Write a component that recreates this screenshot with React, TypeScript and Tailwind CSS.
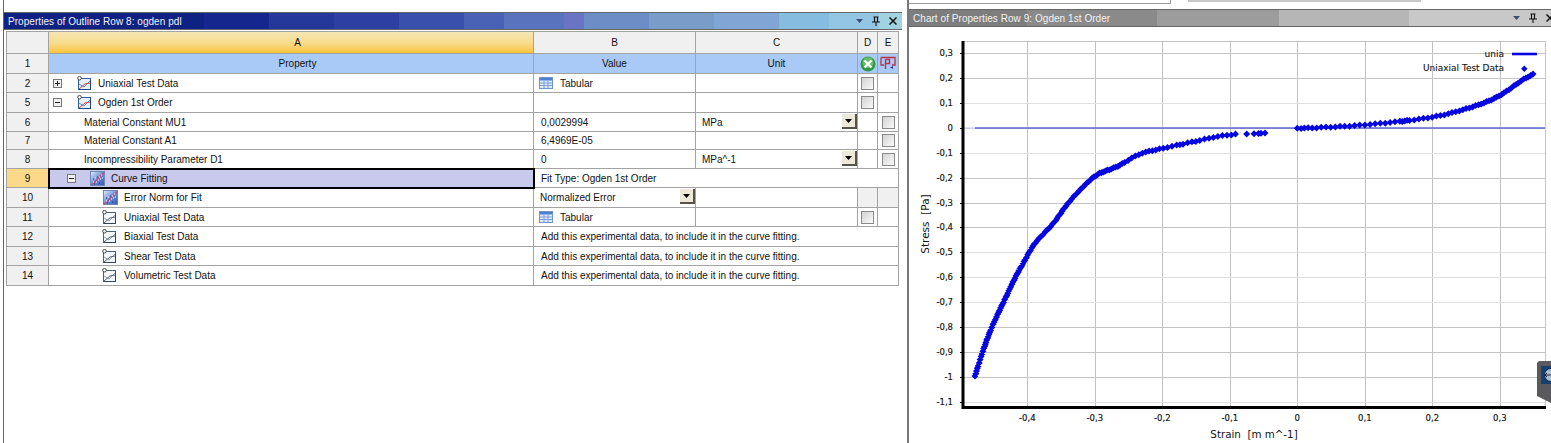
import React from "react";

const sans = { fontFamily: '"Liberation Sans", Arial, sans-serif' };
const GRID = "grid grid-cols-[42px_485px_162px_162px_20px_21px]";

function TreeBox({ plus }: { plus?: boolean }) {
  return (
    <svg width="9" height="9" viewBox="0 0 9 9" className="shrink-0">
      <rect x="0.5" y="0.5" width="8" height="8" fill="#f0f0f0" stroke="#777" />
      <path d={plus ? "M2 4.5H7M4.5 2V7" : "M2 4.5H7"} stroke="#222" />
    </svg>
  );
}

function PlotIcon({ muted }: { muted?: boolean }) {
  return (
    <svg width="15" height="15" viewBox="0 0 15 15" className="shrink-0">
      <rect x="1.5" y="2.5" width="12" height="11" fill={muted ? "#f4f7fb" : "#e6f1fb"} stroke={muted ? "#4d5f78" : "#2f5d99"} />
      <path d="M2 8 L7 11 L13 5" stroke={muted ? "#8ea3bd" : "#4f8fd6"} fill="none" />
      <path d="M2 13 L8 8 L13 7" stroke={muted ? "#54606e" : "#dc3a40"} fill="none" />
      <circle cx="2.5" cy="2.2" r="1.8" fill="#fff" stroke="#444" />
      <path d="M2 13.5H13.5V4" stroke={muted ? "#33445c" : "#1d4580"} fill="none" />
    </svg>
  );
}

function FitIcon() {
  return (
    <svg width="15" height="15" viewBox="0 0 15 15" className="shrink-0">
      <defs>
        <linearGradient id="fitg" x1="0" y1="0" x2="1" y2="1">
          <stop offset="0" stopColor="#e6eefa" />
          <stop offset="0.5" stopColor="#6f92d8" />
          <stop offset="1" stopColor="#2f55ad" />
        </linearGradient>
      </defs>
      <rect x="0.5" y="0.5" width="14" height="14" fill="url(#fitg)" stroke="#6d88b8" />
      <path d="M1 14 C6 11 9 6 14 1.5" stroke="#d23f70" strokeWidth="1.2" fill="none" />
      <path d="M3 11h1M6 11h1M5 7h1M9 6h1M8 9h1M11 4h1M10 8h1M12 7h1" stroke="#fff" />
      <path d="M3 8h1M7 6h1M4 13h1M9 12h1" stroke="#16307c" />
    </svg>
  );
}

function TableIcon() {
  return (
    <svg width="14" height="12" viewBox="0 0 14 12" className="shrink-0">
      <rect x="0.5" y="0.5" width="13" height="11" fill="#dfe9f8" stroke="#6f93cc" />
      <rect x="1" y="1" width="12" height="2.5" fill="#4f7fd0" />
      <path d="M1 6H13M1 8.5H13M5 3.5V11M9 3.5V11" stroke="#7fa0d8" />
    </svg>
  );
}

function Check() {
  return (
    <div className="w-[13px] h-[13px] border border-[#8a8a8a] bg-gradient-to-br from-[#d4d4d4] to-[#fafafa]" />
  );
}

function Drop() {
  return (
    <div className="absolute right-0 top-[1px] w-[15px] h-[15px] bg-[#ece9d8] border-r-2 border-b-2 border-[#55534a] flex items-center justify-center">
      <svg width="7" height="4" viewBox="0 0 7 4">
        <path d="M0 0H7L3.5 4Z" fill="#000" />
      </svg>
    </div>
  );
}

function GreenX() {
  return (
    <svg width="16" height="16" viewBox="0 0 16 16">
      <circle cx="8" cy="8" r="7.5" fill="#2f9a40" />
      <circle cx="8" cy="6.5" r="5.5" fill="#62bd6a" />
      <path d="M4.5 4.5L11.5 11.5M11.5 4.5L4.5 11.5" stroke="#fff" strokeWidth="2.4" />
    </svg>
  );
}

function RedIcon() {
  return (
    <svg width="16" height="15" viewBox="0 0 16 15" fill="none">
      <path d="M1 1.5H15V9H12M1 1.5V9H4" stroke="#b8304a" strokeWidth="1.3" />
      <path d="M5.5 3.5V13M5.5 3.5H9.5V7.5H5.5" stroke="#b8304a" strokeWidth="1.4" />
      <path d="M10 11.5L13 10V13Z" fill="#3a3a8a" />
    </svg>
  );
}

const C = "border-r border-b border-[#a3a3a3] flex items-center min-w-0 relative";

function Idx({ n, active }: { n: number; active?: boolean }) {
  return (
    <div className={`${C} justify-center ${active ? "bg-[#fbd988]" : "bg-[#f0f0f0]"}`}>{n}</div>
  );
}

function Row({ h, children }: { h: string; children: React.ReactNode }) {
  return <div className={`${GRID} ${h}`}>{children}</div>;
}

const TB = ({ children }: { children: React.ReactNode }) => (
  <div className={`${C} pl-[5px] gap-[7px]`}>{children}</div>
);

const Tabular = () => (
  <TB>
    <TableIcon />
    <span>Tabular</span>
  </TB>
);

const Val = ({ t }: { t: string }) => <div className={`${C} pl-[7px]`}>{t}</div>;
const Empty = ({ gray }: { gray?: boolean }) => <div className={`${C} ${gray ? "bg-[#f0f0f0]" : ""}`} />;
const CheckCell = () => (
  <div className={`${C} justify-center`}>
    <Check />
  </div>
);

const Unit = ({ t }: { t: string }) => (
  <div className={`${C} pl-[6px]`}>
    {t}
    <Drop />
  </div>
);

const Note = () => (
  <div className={`${C} col-span-4 pl-[7px]`}>Add this experimental data, to include it in the curve fitting.</div>
);

function Table() {
  return (
    <div className="ml-[2px] mt-[1px] w-[893px] border-l border-t border-[#a3a3a3] text-[10px] text-[#111]" style={sans}>
      <Row h="h-[22px]">
        <div className={`${C} bg-[#f0f0f0]`} />
        <div className={`${C} justify-center pl-[13px] bg-gradient-to-b from-[#f6e6b4] via-[#f8dc8e] to-[#fbc438]`}>A</div>
        <div className={`${C} justify-center bg-[#f0f0f0]`}>B</div>
        <div className={`${C} justify-center bg-[#f0f0f0]`}>C</div>
        <div className={`${C} justify-center bg-[#f0f0f0]`}>D</div>
        <div className={`${C} justify-center bg-[#f0f0f0]`}>E</div>
      </Row>
      <Row h="h-[20px]">
        <Idx n={1} />
        <div className={`${C} justify-center pl-[13px] bg-[#a9c9f6]`}>Property</div>
        <div className={`${C} justify-center bg-[#a9c9f6]`}>Value</div>
        <div className={`${C} justify-center bg-[#a9c9f6]`}>Unit</div>
        <div className={`${C} justify-center bg-[#a9c9f6]`}><GreenX /></div>
        <div className={`${C} justify-center bg-[#a9c9f6]`}><RedIcon /></div>
      </Row>
      <Row h="h-[19px]">
        <Idx n={2} />
        <div className={`${C} pl-[4px]`}>
          <TreeBox plus />
          <span className="ml-[15px]"><PlotIcon /></span>
          <span className="ml-[6px]">Uniaxial Test Data</span>
        </div>
        <Tabular />
        <Empty />
        <CheckCell />
        <Empty />
      </Row>
      <Row h="h-[20px]">
        <Idx n={5} />
        <div className={`${C} pl-[4px]`}>
          <TreeBox />
          <span className="ml-[15px]"><PlotIcon /></span>
          <span className="ml-[6px]">Ogden 1st Order</span>
        </div>
        <Empty />
        <Empty />
        <CheckCell />
        <Empty />
      </Row>
      <Row h="h-[19px]">
        <Idx n={6} />
        <div className={`${C} pl-[35px]`}>Material Constant MU1</div>
        <Val t="0,0029994" />
        <Unit t="MPa" />
        <Empty />
        <CheckCell />
      </Row>
      <Row h="h-[18px]">
        <Idx n={7} />
        <div className={`${C} pl-[35px]`}>Material Constant A1</div>
        <Val t="6,4969E-05" />
        <Empty />
        <Empty />
        <CheckCell />
      </Row>
      <Row h="h-[19px]">
        <Idx n={8} />
        <div className={`${C} pl-[35px]`}>Incompressibility Parameter D1</div>
        <Val t="0" />
        <Unit t="MPa^-1" />
        <Empty />
        <CheckCell />
      </Row>
      <Row h="h-[19px]">
        <Idx n={9} active />
        <div className={`${C} pl-[18px] bg-[#c9c9ee] outline-2 -outline-offset-1 outline-black z-10`}>
          <TreeBox />
          <span className="ml-[14px]"><FitIcon /></span>
          <span className="ml-[6px]">Curve Fitting</span>
        </div>
        <div className={`${C} col-span-4 pl-[7px]`}>Fit Type: Ogden 1st Order</div>
      </Row>
      <Row h="h-[20px]">
        <Idx n={10} />
        <div className={`${C} pl-[54px]`}>
          <FitIcon />
          <span className="ml-[6px]">Error Norm for Fit</span>
        </div>
        <div className={`${C} pl-[6px]`}>
          Normalized Error
          <Drop />
        </div>
        <Empty />
        <Empty gray />
        <Empty gray />
      </Row>
      <Row h="h-[19px]">
        <Idx n={11} />
        <div className={`${C} pl-[53px]`}>
          <PlotIcon muted />
          <span className="ml-[7px]">Uniaxial Test Data</span>
        </div>
        <Tabular />
        <Empty />
        <CheckCell />
        <Empty />
      </Row>
      {[
        [12, "Biaxial Test Data", "h-[20px]"],
        [13, "Shear Test Data", "h-[19px]"],
        [14, "Volumetric Test Data", "h-[20px]"],
      ].map(([n, t, h]) => (
        <Row key={n as number} h={h as string}>
          <Idx n={n as number} />
          <div className={`${C} pl-[53px]`}>
            <PlotIcon muted />
            <span className="ml-[7px]">{t}</span>
          </div>
          <Note />
        </Row>
      ))}
    </div>
  );
}

const leftBlocks: [number, string][] = [
  [200, "#0e2283"], [65, "#15278f"], [65, "#24379b"], [65, "#2e3fa3"], [65, "#3a50ad"],
  [40, "#4a62b5"], [60, "#5a73be"], [20, "#6a74c4"], [65, "#6c8dc6"], [65, "#7a9cc9"],
  [65, "#7fa6d5"], [50, "#86bce0"], [50, "#93c6e4"], [30, "#a0d2e0"], [33, "#b4dcea"],
];

const rightBlocks: [number, string][] = [
  [118, "#7d7d7d"], [130, "#8a8a8a"], [122, "#9c9c9c"], [130, "#b6b6b6"], [142, "#c8c8c8"],
];

function Wins({ cls }: { cls: string }) {
  return (
    <div className={`absolute top-0 h-full flex items-center gap-[9px] ${cls}`}>
      <svg width="7" height="4" viewBox="0 0 7 4"><path d="M0 0H7L3.5 4Z" fill="#3b4f78" /></svg>
      <svg width="8" height="10" viewBox="0 0 8 10" fill="none">
        <path d="M1.5 1H6.5M2.5 1V6H5.5V1M0 6H8M4 6V10" stroke="#111" strokeWidth="1.1" />
      </svg>
      <svg width="8" height="8" viewBox="0 0 8 8">
        <path d="M0.5 0.5L7.5 7.5M7.5 0.5L0.5 7.5" stroke="#111" strokeWidth="1.5" />
      </svg>
    </div>
  );
}

function TitleBar({ text, blocks, cls, wins }: { text: string; blocks: [number, string][]; cls: string; wins: string }) {
  return (
    <div className={`relative flex border-t border-b border-[#666] h-[18px] overflow-hidden ${cls}`}>
      {blocks.map(([w, c], i) => (
        <div key={i} className="shrink-0 h-full" style={{ width: w, background: c }} />
      ))}
      <div className="absolute left-[4px] top-0 h-full flex items-center text-[10px] tracking-[0.05px] text-[#f2f2f2]" style={sans}>
        {text}
      </div>
      <Wins cls={wins} />
    </div>
  );
}

/* ---- chart ---- */
const X = (v: number) => 1297.3 + 675 * v;
const Y = (v: number) => 128 - 248.7 * v;

type P = [number, number];

const seg1: P[] = [
  [975, 376], [983.3, 350], [990.7, 330], [998.3, 313], [1005, 299], [1015, 278],
  [1025, 260], [1035, 243.3], [1053.3, 223.3], [1066.7, 205], [1080, 190], [1096.7, 175], [1116.7, 166.7],
  [1140, 154], [1163.3, 148.3], [1193.3, 141.7], [1216.7, 136.7], [1236.7, 134],
];
const sparse: P[] = [[1246.7, 134], [1254, 133.7], [1258.5, 133.5], [1261, 133.3], [1265, 133]];
const seg2: P[] = [
  [1297.3, 128.3], [1337.7, 126.7], [1387.7, 122.7], [1434.3, 116.7], [1471, 107.3], [1497.7, 96.7],
  [1521, 81], [1533.7, 74],
];

function smooth(pts: P[]) {
  const out: P[] = [];
  for (let i = 0; i < pts.length - 1; i++) {
    const p0 = pts[Math.max(0, i - 1)];
    const p1 = pts[i];
    const p2 = pts[i + 1];
    const p3 = pts[Math.min(pts.length - 1, i + 2)];
    for (let k = 0; k < 20; k++) {
      const t = k / 20;
      const f = (a: number, b: number, c: number, d: number) =>
        0.5 * (2 * b + (c - a) * t + (2 * a - 5 * b + 4 * c - d) * t * t + (3 * b - a - 3 * c + d) * t * t * t);
      out.push([f(p0[0], p1[0], p2[0], p3[0]), f(p0[1], p1[1], p2[1], p3[1])]);
    }
  }
  out.push(pts[pts.length - 1]);
  return out;
}

function sample(pts: P[], stepAt: (x: number) => number) {
  const fine = smooth(pts);
  const out: P[] = [fine[0]];
  let acc = 0;
  for (let i = 1; i < fine.length; i++) {
    acc += Math.hypot(fine[i][0] - fine[i - 1][0], fine[i][1] - fine[i - 1][1]);
    if (acc >= stepAt(fine[i][0])) {
      const n = out.length;
      out.push([fine[i][0], fine[i][1] + 0.3 * Math.sin(n * 1.7)]);
      acc = 0;
    }
  }
  return out;
}

const diamonds = [
  ...sample(seg1, (x) => (x < 1125 ? 2 : x < 1200 ? 3.2 : 4)),
  ...sparse,
  ...sample(seg2, (x) => (x < 1400 ? 3 : 2.4)),
];
const R = 3.5;
const dPath = diamonds
  .map(([x, y]) => `M${x.toFixed(1)} ${(y - R).toFixed(1)}L${(x + R).toFixed(1)} ${y.toFixed(1)}L${x.toFixed(1)} ${(y + R).toFixed(1)}L${(x - R).toFixed(1)} ${y.toFixed(1)}Z`)
  .join("");

const yTicks = [0.3, 0.2, 0.1, 0, -0.1, -0.2, -0.3, -0.4, -0.5, -0.6, -0.7, -0.8, -0.9, -1, -1.1];
const lightY = new Set([0.1, -0.5, -0.6, -0.7, -1.1, -0.1]);
const xTicks = [-0.4, -0.3, -0.2, -0.1, 0, 0.1, 0.2, 0.3];
const fmt = (v: number) => String(v).replace(".", ",");

function Chart() {
  return (
    <svg width="642" height="416" viewBox="909 27 642 416" className="block" style={{ fontFamily: '"DejaVu Sans", sans-serif' }}>
      <path d="M964 41.5H1545.5V406" fill="none" stroke="#c4c4c4" />
      {xTicks.map((v) => (
        <line key={v} x1={Math.round(X(v)) + 0.5} x2={Math.round(X(v)) + 0.5} y1={41} y2={406} stroke="#c2c2c2" />
      ))}
      {yTicks.map((v) => (
        <g key={v}>
          <line x1={964} x2={1545} y1={Math.round(Y(v)) + 0.5} y2={Math.round(Y(v)) + 0.5} stroke={lightY.has(v) ? "#e0e0e0" : "#c4c4c4"} />
          <line x1={960} x2={963} y1={Math.round(Y(v)) + 0.5} y2={Math.round(Y(v)) + 0.5} stroke="#000" />
          <text x={953} y={Y(v) + 3} textAnchor="end" fontSize="8.5" fill="#111" stroke="#111" strokeWidth="0.15">
            {fmt(v)}
          </text>
        </g>
      ))}
      {xTicks.map((v) => (
        <text key={v} x={X(v)} y={421} textAnchor="middle" fontSize="8.5" fill="#111" stroke="#111" strokeWidth="0.15">
          {fmt(v)}
        </text>
      ))}
      <line x1={975} x2={1545} y1={128} y2={128} stroke="#5f68d6" strokeWidth="1.4" />
      <line x1={964} x2={975} y1={128} y2={128} stroke="#d5d7f2" strokeWidth="1.4" />
      <path d="M963 41V407.5H1546" fill="none" stroke="#000" strokeWidth="3" />
      <path d={dPath} fill="#0505e0" />
      <text x={1504} y={57} textAnchor="end" fontSize="9" fill="#111" stroke="#111" strokeWidth="0.1">unia</text>
      <line x1={1512} x2={1537} y1={54} y2={54} stroke="#0505e0" strokeWidth="2.6" />
      <text x={1504} y={71} textAnchor="end" fontSize="9" fill="#111" stroke="#111" strokeWidth="0.1">Uniaxial Test Data</text>
      <path d="M1524.3 65.5L1527.5 68.7L1524.3 71.9L1521.1 68.7Z" fill="#0505e0" />
      <text x={1254} y={438} textAnchor="middle" fontSize="10.3" fill="#111" xmlSpace="preserve">Strain  [m m^-1]</text>
      <text transform="translate(929 224) rotate(-90)" textAnchor="middle" fontSize="10.5" fill="#111" xmlSpace="preserve">Stress  [Pa]</text>
      <path d="M1539 361H1551V403L1545 400L1537 396V363Z" fill="#5a5a5e" />
      <rect x="1541" y="366" width="12" height="18" fill="#16406e" />
      <circle cx="1551" cy="375" r="6.5" fill="#a9bfd4" stroke="#0e2c50" />
      <path d="M1545 375H1551M1547 373L1545 375L1547 377" stroke="#223" fill="none" />
    </svg>
  );
}

export default function App() {
  return (
    <div className="w-[1551px] h-[443px] overflow-hidden flex bg-white">
      <div className="w-[907px] shrink-0 h-full pl-[3px]">
        <div className="h-full border-l border-[#666] pt-[12px]">
          <TitleBar text="Properties of Outline Row 8: ogden pdl" blocks={leftBlocks} cls="w-[898px]" wins="right-[5px]" />
          <Table />
        </div>
      </div>
      <div className="flex-1 min-w-0 border-l-2 border-[#777] flex flex-col">
        <div className="h-[9px] flex items-start">
          <div className="w-[262px] h-[4px] border-b border-r border-[#999]" />
          <div className="ml-[17px] w-[233px] h-[2px] bg-[#c8c8c8]" />
        </div>
        <TitleBar text="Chart of Properties Row 9: Ogden 1st Order" blocks={rightBlocks} cls="" wins="-right-[3px]" />
        <Chart />
      </div>
    </div>
  );
}
